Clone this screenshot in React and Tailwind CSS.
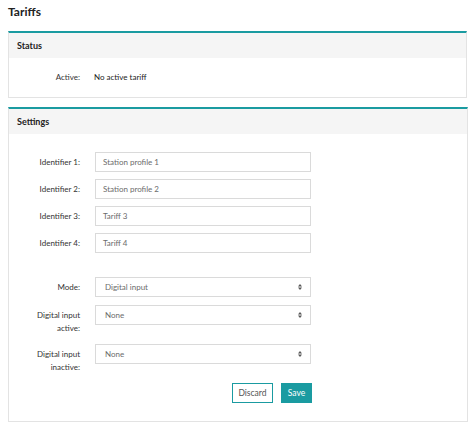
import React from 'react'

const teal = 'border-[#1a9ba1]'

function Card({ title, children, className = '' }) {
  return (
    <div className={`border border-[#e3e3e3] border-t-2 border-t-[#1a9ba1] bg-white ${className}`}>
      <div className="h-[25px] bg-[#f5f5f5] px-[8px] flex items-center text-[9px] font-bold text-[#222]">
        {title}
      </div>
      {children}
    </div>
  )
}

function Arrows() {
  return (
    <svg width="4" height="6" viewBox="0 0 4 6" className="shrink-0 mr-[1px]">
      <path d="M2 0 L4 2.4 L0 2.4 Z" fill="#555" />
      <path d="M2 6 L4 3.6 L0 3.6 Z" fill="#555" />
    </svg>
  )
}

function Row({ label, children, twoLine = false, className = '' }) {
  return (
    <div className={`flex items-start ${className}`}>
      <div
        className={`w-[63px] shrink-0 text-right text-[8px] text-[#333] leading-[13px] ${
          twoLine ? 'pt-[4px]' : 'h-[20px] flex items-center justify-end'
        }`}
      >
        {label}
      </div>
      <div className="ml-[15px] w-[216px]">{children}</div>
    </div>
  )
}

function Input({ value }) {
  return (
    <div className="h-[20px] border border-[#dadada] bg-white flex items-center px-[7px] text-[8px] text-[#6b6b6b]">
      {value}
    </div>
  )
}

function Select({ value }) {
  return (
    <div className="h-[20px] border border-[#dadada] bg-white flex items-center justify-between pl-[9px] pr-[7px] text-[8px] text-[#6b6b6b]">
      <span>{value}</span>
      <Arrows />
    </div>
  )
}

export default function App() {
  return (
    <div className="w-[474px] h-[426px] bg-white px-[8px] font-['Lato','Liberation_Sans',sans-serif] overflow-hidden">
      <h1 className="pt-[4px] h-[31px] text-[12px] font-bold text-[#222] leading-[16px]">Tariffs</h1>

      <Card title="Status" className="w-[459px]">
        <div className="flex items-center py-[13px] text-[8px] leading-[13px]">
          <div className="w-[71px] text-right text-[#333]">Active:</div>
          <div className="ml-[14px] text-[#222]">No active tariff</div>
        </div>
      </Card>

      <Card title="Settings" className="w-[460px] mt-[9px]">
        <div className="pl-[8px] pt-[18px] pb-[18px] flex flex-col">
          <Row label="Identifier 1:" className="mb-[7px]"><Input value="Station profile 1" /></Row>
          <Row label="Identifier 2:" className="mb-[7px]"><Input value="Station profile 2" /></Row>
          <Row label="Identifier 3:" className="mb-[7px]"><Input value="Tariff 3" /></Row>
          <Row label="Identifier 4:" className="mb-[24px]"><Input value="Tariff 4" /></Row>
          <Row label="Mode:" className="mb-[8px]"><Select value="Digital input" /></Row>
          <Row label={<>Digital input<br />active:</>} twoLine className="mb-[9px]"><Select value="None" /></Row>
          <Row label={<>Digital input<br />inactive:</>} twoLine className="mb-[9px]"><Select value="None" /></Row>
          <div className="w-[295px] flex justify-end gap-[8px]">
            <button className={`h-[20px] w-[41px] border ${teal} bg-white text-[8.5px] text-[#555]`}>Discard</button>
            <button className="h-[20px] w-[31px] bg-[#1a9ba1] text-[8.5px] text-white">Save</button>
          </div>
        </div>
      </Card>
    </div>
  )
}
